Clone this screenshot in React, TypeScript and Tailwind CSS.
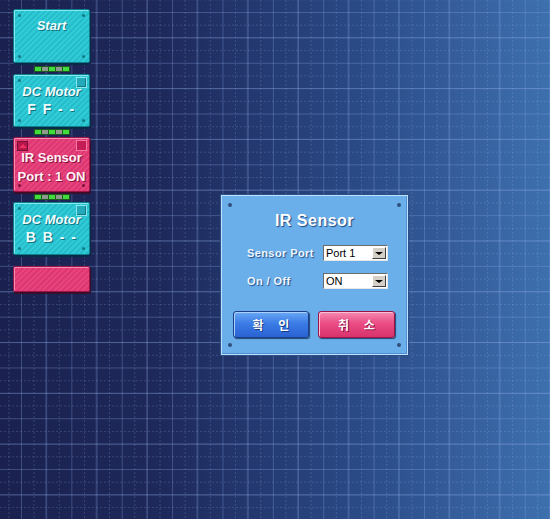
import React from 'react';

const font = '[font-family:"Liberation_Sans",Arial,sans-serif]';

function Dots({ dark }: { dark?: boolean }) {
  const c = dark ? 'bg-[#7a1038]' : 'bg-[#137886]';
  return (
    <>
      <span className={`absolute left-[4px] top-[4px] w-[3px] h-[3px] rounded-full ${c}`} />
      <span className={`absolute right-[4px] top-[4px] w-[3px] h-[3px] rounded-full ${c}`} />
      <span className={`absolute left-[4px] bottom-[4px] w-[3px] h-[3px] rounded-full ${c}`} />
      <span className={`absolute right-[4px] bottom-[4px] w-[3px] h-[3px] rounded-full ${c}`} />
    </>
  );
}

function Link({ h }: { h: string }) {
  const segs = ['bg-[#3fdc3c]', 'bg-[#8f9a8f]', 'bg-[#3fdc3c]', 'bg-[#8f9a8f]', 'bg-[#3fdc3c]'];
  return (
    <div className={`${h} flex items-center justify-center`}>
      <div className="flex gap-[1px] bg-[#1d5a20] p-[1px]">
        {segs.map((s, i) => (
          <span key={i} className={`w-[6px] h-[4px] ${s}`} />
        ))}
      </div>
    </div>
  );
}

const teal =
  'relative w-[77px] rounded-[2px] border border-[#0f7f8c] bg-[repeating-linear-gradient(135deg,#2fcbd6_0px,#2fcbd6_2px,#26bcc9_2px,#26bcc9_4px)] shadow-[inset_1px_1px_0_#84e8ef,1px_2px_0_#0b2a4a]';
const pink =
  'relative w-[77px] rounded-[2px] border border-[#9b1447] bg-[repeating-linear-gradient(135deg,#e8447c_0px,#e8447c_2px,#dc3772_2px,#dc3772_4px)] shadow-[inset_1px_1px_0_#f58fb2,1px_2px_0_#3a0d2a]';

const blockText = `text-[#effdff] font-bold italic text-[13px] leading-[15px] [text-shadow:1px_1px_0_#0d7480] ${font}`;
const codeText = `text-[#effdff] font-bold text-[14px] leading-[15px] mt-[3px] tracking-[1.5px] [text-shadow:1px_1px_0_#0d7480] ${font}`;
const pinkText = `text-[#fff2f6] font-bold leading-[15px] [text-shadow:1px_1px_0_#8a0f3c] ${font}`;

function TealSquare() {
  return <span className="absolute right-[2px] top-[2px] w-[11px] h-[11px] bg-[#23aab8] border border-[#8ae6ee] shadow-[inset_-1px_-1px_0_#137886]" />;
}

function Row({ label, value }: { label: string; value: string }) {
  return (
    <div className="flex items-center h-[16px]">
      <span className="w-[76px] text-[#eef7ff] font-bold text-[11px] tracking-[0.4px] [text-shadow:1px_1px_1px_#1f4f8c]">{label}</span>
      <div className="w-[65px] h-[16px] bg-white border border-t-[#6b6b6b] border-l-[#6b6b6b] border-b-[#e6e6e6] border-r-[#e6e6e6] flex items-center">
        <span className="flex-1 text-[11px] text-black pl-[2px] leading-[14px]">{value}</span>
        <span className="w-[14px] h-[12px] mr-[1px] bg-[#d4d0c8] border border-t-white border-l-white border-b-[#404040] border-r-[#404040] flex items-center justify-center">
          <span className="w-0 h-0 border-l-[4px] border-r-[4px] border-t-[3px] border-l-transparent border-r-transparent border-t-black" />
        </span>
      </div>
    </div>
  );
}

export default function App() {
  return (
    <div
      className={`w-[550px] h-[519px] overflow-hidden flex pl-[13px] pt-[9px] ${font} [background-image:conic-gradient(at_1px_2px,transparent_75%,rgba(150,180,235,.22)_0),conic-gradient(at_2px_1px,transparent_75%,rgba(150,180,235,.22)_0),linear-gradient(90deg,rgba(170,200,245,.16)_1px,transparent_0),linear-gradient(rgba(170,200,245,.16)_1px,transparent_0),linear-gradient(90deg,rgba(130,160,225,.34)_1px,transparent_0),linear-gradient(rgba(130,160,225,.34)_1px,transparent_0),linear-gradient(90deg,#1a214f_0%,#1e295b_30%,#2a4a86_65%,#3e70ae_100%)] [background-size:25.2px_4px,4px_25.4px,50.4px_100%,100%_50.8px,25.2px_100%,100%_25.4px,100%_100%] [background-position:8.4px_0,0_24.7px,45.2px_0,0_37.2px,21px_0,0_12px,0_0]`}
    >
      <div className="flex flex-col w-[77px]">
        <div className={`${teal} h-[54px]`}>
          <Dots />
          <div className="flex flex-col items-center pt-[8px]">
            <span className={blockText}>Start</span>
          </div>
        </div>
        <Link h="h-[11px]" />
        <div className={`${teal} h-[53px]`}>
          <Dots />
          <TealSquare />
          <div className="flex flex-col items-center pt-[9px]">
            <span className={blockText}>DC Motor</span>
            <span className={codeText}>F F - -</span>
          </div>
        </div>
        <Link h="h-[10px]" />
        <div className={`${pink} h-[55px]`}>
          <Dots dark />
          <span className="absolute left-[3px] top-[3px] w-[11px] h-[10px] bg-[#b5164c] border border-[#7a0f35] flex items-start justify-center">
            <span className="mt-[2px] w-0 h-0 border-l-[4px] border-r-[4px] border-b-[4px] border-l-transparent border-r-transparent border-b-[#f03060]" />
          </span>
          <span className="absolute right-[2px] top-[2px] w-[11px] h-[11px] bg-[#c41c55] border border-[#f27aa2]" />
          <div className="flex flex-col items-center pt-[12px]">
            <span className={`${pinkText} text-[13px]`}>IR Sensor</span>
            <span className={`${pinkText} text-[13px] mt-[4px]`}>Port : 1 ON</span>
          </div>
        </div>
        <Link h="h-[10px]" />
        <div className={`${teal} h-[53px]`}>
          <Dots />
          <TealSquare />
          <div className="flex flex-col items-center pt-[9px]">
            <span className={blockText}>DC Motor</span>
            <span className={codeText}>B B - -</span>
          </div>
        </div>
        <div className="h-[11px]" />
        <div className={`${pink} h-[26px]`} />
      </div>

      <div className="ml-[131px] mt-[186px] relative w-[187px] h-[160px] bg-[#6aaeea] border border-[#bfe0ff] shadow-[0_0_0_1px_#2a4f86,inset_-1px_-1px_0_#4d8fd0]">
        <span className="absolute left-[6px] top-[7px] w-[4px] h-[4px] rounded-full bg-[#2d4f7a]" />
        <span className="absolute right-[6px] top-[7px] w-[4px] h-[4px] rounded-full bg-[#2d4f7a]" />
        <span className="absolute left-[6px] bottom-[7px] w-[4px] h-[4px] rounded-full bg-[#2d4f7a]" />
        <span className="absolute right-[6px] bottom-[7px] w-[4px] h-[4px] rounded-full bg-[#2d4f7a]" />

        <div className="flex justify-center pt-[15px]">
          <span className="text-white font-bold text-[16px] leading-[20px] tracking-[0.5px] [text-shadow:1px_1px_1px_#1b4785]">IR Sensor</span>
        </div>

        <div className="flex flex-col gap-[12px] mt-[14px] pl-[25px]">
          <Row label="Sensor Port" value="Port 1" />
          <Row label="On / Off" value="ON" />
        </div>

        <div className="flex gap-[9px] pl-[11px] mt-[22px]">
          <button className="w-[76px] h-[27px] rounded-[3px] border border-[#1c3f8c] bg-[linear-gradient(#6aa8f4,#3b7ce6_45%,#2a62d2)] shadow-[inset_1px_1px_0_#a9d0ff,1px_1px_1px_#25466e] text-white font-bold text-[12px] tracking-[6px] pl-[6px] [font-family:'Noto_Sans_CJK_KR',sans-serif] [text-shadow:1px_1px_0_#173a80]">
            확 인
          </button>
          <button className="w-[77px] h-[27px] rounded-[3px] border border-[#9a1447] bg-[linear-gradient(#f58ab0,#ea4d84_45%,#d8326c)] shadow-[inset_1px_1px_0_#ffc0d6,1px_1px_1px_#25466e] text-white font-bold text-[12px] tracking-[6px] pl-[6px] [font-family:'Noto_Sans_CJK_KR',sans-serif] [text-shadow:1px_1px_0_#8a0f3c]">
            취 소
          </button>
        </div>
      </div>
    </div>
  );
}
